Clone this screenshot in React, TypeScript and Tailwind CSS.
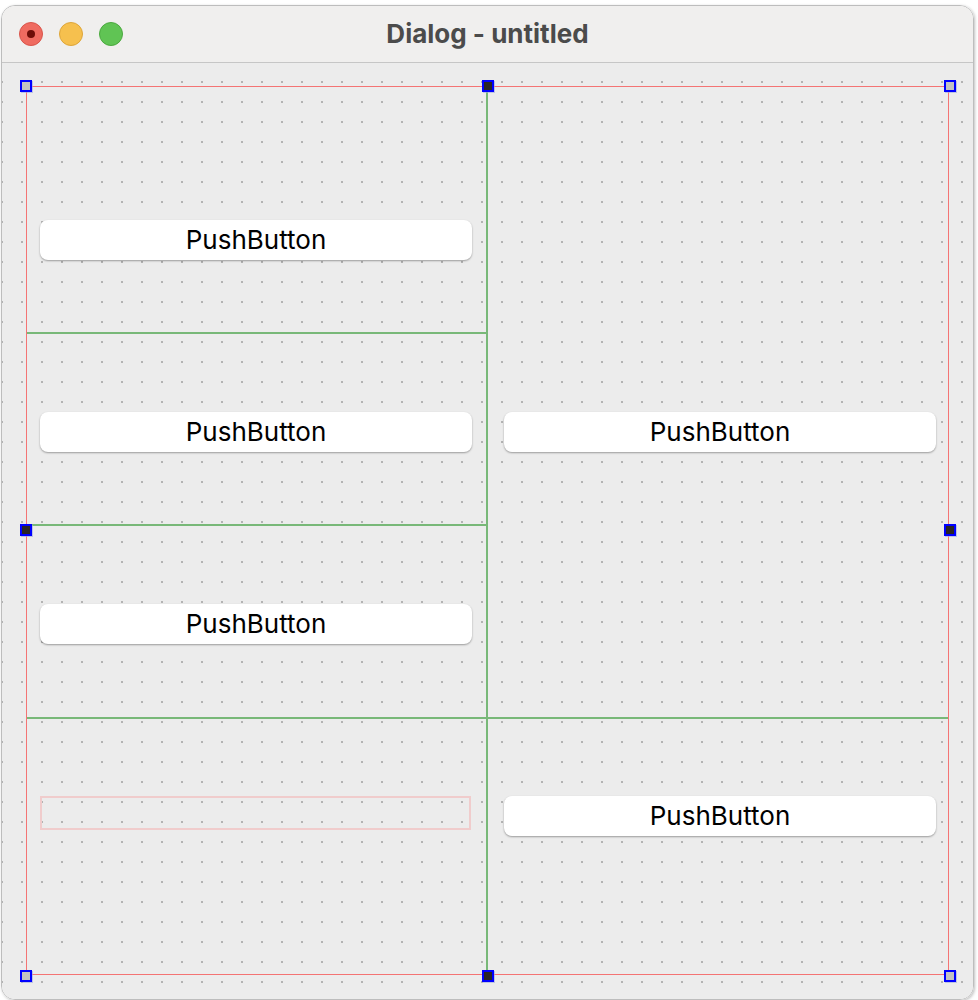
import React from 'react';

const Handle = ({ x, y, dark }: { x: number; y: number; dark?: boolean }) => (
  <div
    className={`absolute w-[12px] h-[12px] border-2 border-[#0000ff] shadow-[1px_1px_0_rgba(160,170,220,0.6)] ${dark ? 'bg-[#2a2525]' : 'bg-[#c2c2c2]'}`}
    style={{ left: x, top: y }}
  />
);

const PushButton = () => (
  <div className="w-[432px] h-[40px] bg-white rounded-[8px] shadow-[0_1px_2px_rgba(0,0,0,0.35)] flex items-center justify-center text-[26px] leading-none text-black">
    PushButton
  </div>
);

const App = () => {
  return (
    <div className="w-[978px] h-[1000px] bg-white pt-[5px] pl-[1px] pr-[4px] font-['Inter','Liberation_Sans',sans-serif]">
      <div className="h-[995px] rounded-[14px] border border-[#bdbdbd] overflow-hidden flex flex-col shadow-[1px_1px_3px_rgba(0,0,0,0.25)]">
        {/* Title bar */}
        <div className="relative h-[57px] shrink-0 bg-[#f0efee] border-b border-[#c6c6c6] flex items-center justify-center">
          <div className="absolute left-[17px] top-[16px] flex gap-[16px]">
            <div className="w-[24px] h-[24px] rounded-full bg-[#ef6b60] border border-[#d9554b] flex items-center justify-center">
              <div className="w-[8px] h-[8px] rounded-full bg-[#6e0e08]" />
            </div>
            <div className="w-[24px] h-[24px] rounded-full bg-[#f6c04e] border border-[#dea63a]" />
            <div className="w-[24px] h-[24px] rounded-full bg-[#60c454] border border-[#4ba93f]" />
          </div>
          <span className="text-[26px] leading-none font-bold text-[#4b4b4b]">Dialog - untitled</span>
        </div>

        {/* Form canvas */}
        <div className="relative flex-1 bg-[#ececec] bg-[radial-gradient(circle,#b3b3b3_1px,transparent_1.3px)] bg-[size:20px_20px] bg-[position:-10px_-11px] pl-[24px] pt-[23px]">
          <div className="w-[923px] h-[889px] border border-[#f47474] flex flex-col">
            {/* Top part */}
            <div className="h-[632px] shrink-0 border-b-2 border-[#78b878] flex">
              <div className="w-[461px] shrink-0 border-r-2 border-[#78b878] flex flex-col">
                <div className="h-[247px] shrink-0 border-b-2 border-[#78b878] pt-[133px] pl-[13px]">
                  <PushButton />
                </div>
                <div className="h-[192px] shrink-0 border-b-2 border-[#78b878] pt-[78px] pl-[13px]">
                  <PushButton />
                </div>
                <div className="flex-1 pt-[78px] pl-[13px]">
                  <PushButton />
                </div>
              </div>
              <div className="flex-1 pt-[325px] pl-[16px]">
                <PushButton />
              </div>
            </div>
            {/* Bottom part */}
            <div className="flex-1 flex">
              <div className="w-[461px] shrink-0 border-r-2 border-[#78b878] pt-[77px] pl-[13px]">
                <div className="w-[431px] h-[34px] border-2 border-[#f0cccc]" />
              </div>
              <div className="flex-1 pt-[77px] pl-[16px]">
                <PushButton />
              </div>
            </div>
          </div>

          {/* Selection handles */}
          <Handle x={18} y={17} />
          <Handle x={480} y={17} dark />
          <Handle x={942} y={17} />
          <Handle x={18} y={461} dark />
          <Handle x={942} y={461} dark />
          <Handle x={18} y={907} />
          <Handle x={480} y={907} dark />
          <Handle x={942} y={907} />
        </div>
      </div>
    </div>
  );
};

export default App;
